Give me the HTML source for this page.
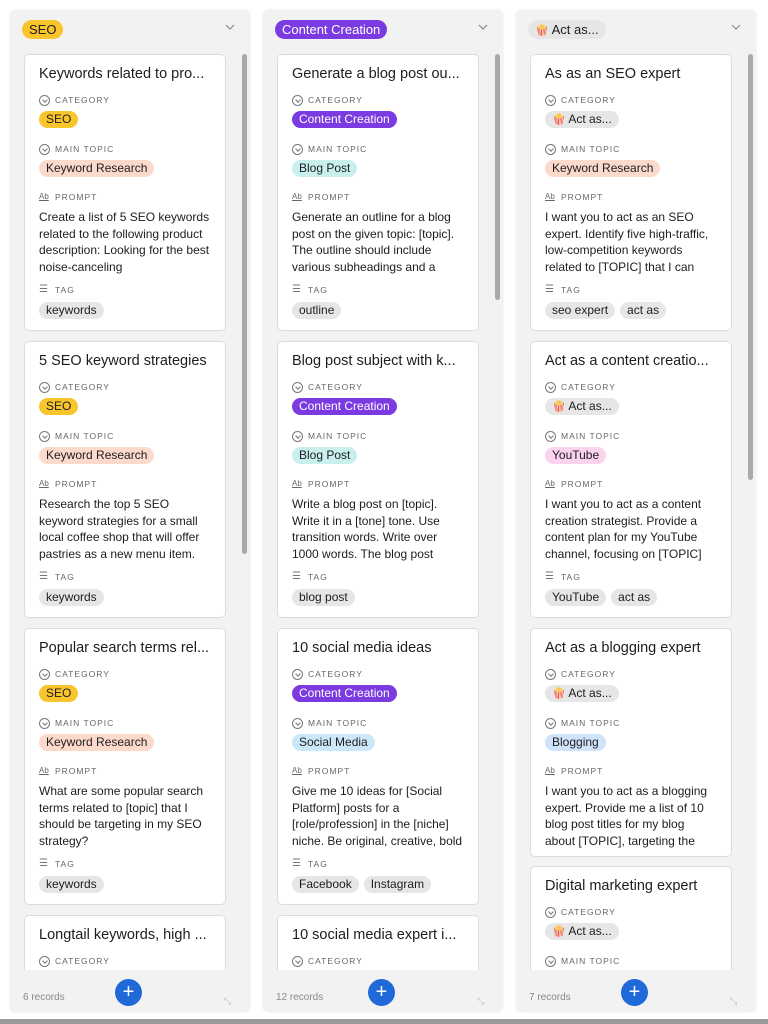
<!DOCTYPE html>
<html><head><style>
*{box-sizing:border-box;margin:0;padding:0}
html,body{width:768px;height:1024px;overflow:hidden}
body{background:#fff;font-family:"Liberation Sans",Arial,sans-serif;position:relative;color:#1d1d1f}
.col{position:absolute;top:10px;width:240px;height:1002px;background:#f2f2f2;border-radius:6px;box-shadow:0 0 2px rgba(0,0,0,.12);overflow:hidden}
.hdr{position:absolute;left:12px;top:10px;height:19px;border-radius:10px;font-size:13px;line-height:19px;padding:0 7px}
.chev{position:absolute;right:14px;top:12px;width:12px;height:10px}
.list{position:absolute;left:14px;top:44px;width:202px;height:916px;overflow:hidden}
.card{background:#fff;border:1px solid #dcdcdc;border-radius:5px;height:277px;margin-bottom:10px;padding:10px 14px 0 14px;overflow:hidden}
.t{font-size:14.5px;line-height:18px;height:18px;white-space:nowrap;overflow:hidden}
.lb{font-size:8.5px;letter-spacing:1px;color:#666;height:14px;line-height:14px;display:flex;align-items:center;gap:5px}
.ic{width:11px;height:11px;border:1px solid #777;border-radius:50%;position:relative;flex:none}
.ic:after{content:"";position:absolute;left:3px;top:2px;width:3px;height:3px;border-right:1px solid #777;border-bottom:1px solid #777;transform:rotate(45deg)}
.ab{font-size:8px;color:#666;letter-spacing:0;width:11px;text-decoration:underline;flex:none}
.tg{width:11px;flex:none;font-size:10px;color:#777;letter-spacing:-1px}
.pr{height:17px;display:flex;gap:5px}
.p{display:inline-block;height:17px;line-height:17px;font-size:12px;padding:0 7px;border-radius:9px;white-space:nowrap}
.m10{margin-top:10px}.m4{margin-top:4px}.m14{margin-top:14px}.m13{margin-top:13px}
.tx{margin-top:5px;font-size:12px;line-height:16.7px;height:67px;overflow:hidden}
.m7{margin-top:7px}.m45{margin-top:4.5px}
.seo{background:#f9c52c}.cc{background:#7b3be0;color:#fff}.act{background:#e6e6e6}
.kr{background:#fbdacb}.bp{background:#c9f0ee}.sm{background:#cce8f8}.yt{background:#fbd3ef}.bl{background:#cfe3fb}.gr{background:#e6e6e6}
.sb{position:absolute;width:5px;border-radius:3px;background:#a8a8a8}
.ft{position:absolute;top:982px;font-size:10px;color:#888}
.plus{position:absolute;top:969px;width:27px;height:27px;border-radius:50%;background:#1f6ad8;color:#fff;font-size:20px;line-height:26px;text-align:center}
.cmp{position:absolute;top:986px;font-size:9px;color:#bbb}
.pop{color:#c0392b;font-size:11px}
</style></head><body>

<div class="col" style="left:10px">
 <div class="hdr seo">SEO</div>
 <svg class="chev" viewBox="0 0 12 10"><path d="M2 3l4 4 4-4" fill="none" stroke="#888" stroke-width="1.2"/></svg>
 <div class="list">
  <div class="card"><div class="t">Keywords related to pro...</div>
   <div class="lb m10"><span class="ic"></span>CATEGORY</div><div class="pr m4"><span class="p seo">SEO</span></div>
   <div class="lb m14"><span class="ic"></span>MAIN TOPIC</div><div class="pr m4"><span class="p kr">Keyword Research</span></div>
   <div class="lb m13"><span class="ab">Ab</span>PROMPT</div>
   <div class="tx">Create a list of 5 SEO keywords related to the following product description: Looking for the best noise-canceling</div>
   <div class="lb m7"><span class="tg">☰</span>TAG</div><div class="pr m45"><span class="p gr">keywords</span></div></div>
  <div class="card"><div class="t">5 SEO keyword strategies</div>
   <div class="lb m10"><span class="ic"></span>CATEGORY</div><div class="pr m4"><span class="p seo">SEO</span></div>
   <div class="lb m14"><span class="ic"></span>MAIN TOPIC</div><div class="pr m4"><span class="p kr">Keyword Research</span></div>
   <div class="lb m13"><span class="ab">Ab</span>PROMPT</div>
   <div class="tx">Research the top 5 SEO keyword strategies for a small local coffee shop that will offer pastries as a new menu item.</div>
   <div class="lb m7"><span class="tg">☰</span>TAG</div><div class="pr m45"><span class="p gr">keywords</span></div></div>
  <div class="card"><div class="t">Popular search terms rel...</div>
   <div class="lb m10"><span class="ic"></span>CATEGORY</div><div class="pr m4"><span class="p seo">SEO</span></div>
   <div class="lb m14"><span class="ic"></span>MAIN TOPIC</div><div class="pr m4"><span class="p kr">Keyword Research</span></div>
   <div class="lb m13"><span class="ab">Ab</span>PROMPT</div>
   <div class="tx">What are some popular search terms related to [topic] that I should be targeting in my SEO strategy?</div>
   <div class="lb m7"><span class="tg">☰</span>TAG</div><div class="pr m45"><span class="p gr">keywords</span></div></div>
  <div class="card"><div class="t">Longtail keywords, high ...</div>
   <div class="lb m10"><span class="ic"></span>CATEGORY</div></div>
 </div>
 <div class="sb" style="left:232px;top:44px;height:500px"></div>
 <div class="ft" style="left:13px">6 records</div><div class="plus" style="left:105px">+</div><div class="cmp" style="left:214px">⤡</div>
</div>

<div class="col" style="left:263px">
 <div class="hdr cc">Content Creation</div>
 <svg class="chev" viewBox="0 0 12 10"><path d="M2 3l4 4 4-4" fill="none" stroke="#888" stroke-width="1.2"/></svg>
 <div class="list">
  <div class="card"><div class="t">Generate a blog post ou...</div>
   <div class="lb m10"><span class="ic"></span>CATEGORY</div><div class="pr m4"><span class="p cc">Content Creation</span></div>
   <div class="lb m14"><span class="ic"></span>MAIN TOPIC</div><div class="pr m4"><span class="p bp">Blog Post</span></div>
   <div class="lb m13"><span class="ab">Ab</span>PROMPT</div>
   <div class="tx">Generate an outline for a blog post on the given topic: [topic]. The outline should include various subheadings and a</div>
   <div class="lb m7"><span class="tg">☰</span>TAG</div><div class="pr m45"><span class="p gr">outline</span></div></div>
  <div class="card"><div class="t">Blog post subject with k...</div>
   <div class="lb m10"><span class="ic"></span>CATEGORY</div><div class="pr m4"><span class="p cc">Content Creation</span></div>
   <div class="lb m14"><span class="ic"></span>MAIN TOPIC</div><div class="pr m4"><span class="p bp">Blog Post</span></div>
   <div class="lb m13"><span class="ab">Ab</span>PROMPT</div>
   <div class="tx">Write a blog post on [topic]. Write it in a [tone] tone. Use transition words. Write over 1000 words. The blog post</div>
   <div class="lb m7"><span class="tg">☰</span>TAG</div><div class="pr m45"><span class="p gr">blog post</span></div></div>
  <div class="card"><div class="t">10 social media ideas</div>
   <div class="lb m10"><span class="ic"></span>CATEGORY</div><div class="pr m4"><span class="p cc">Content Creation</span></div>
   <div class="lb m14"><span class="ic"></span>MAIN TOPIC</div><div class="pr m4"><span class="p sm">Social Media</span></div>
   <div class="lb m13"><span class="ab">Ab</span>PROMPT</div>
   <div class="tx">Give me 10 ideas for [Social Platform] posts for a [role/profession] in the [niche] niche. Be original, creative, bold</div>
   <div class="lb m7"><span class="tg">☰</span>TAG</div><div class="pr m45"><span class="p gr">Facebook</span><span class="p gr">Instagram</span></div></div>
  <div class="card"><div class="t">10 social media expert i...</div>
   <div class="lb m10"><span class="ic"></span>CATEGORY</div></div>
 </div>
 <div class="sb" style="left:232px;top:44px;height:246px"></div>
 <div class="ft" style="left:13px">12 records</div><div class="plus" style="left:105px">+</div><div class="cmp" style="left:214px">⤡</div>
</div>

<div class="col" style="left:516px">
 <div class="hdr act"><span class="pop">🍿</span> Act as...</div>
 <svg class="chev" viewBox="0 0 12 10"><path d="M2 3l4 4 4-4" fill="none" stroke="#888" stroke-width="1.2"/></svg>
 <div class="list">
  <div class="card"><div class="t">As as an SEO expert</div>
   <div class="lb m10"><span class="ic"></span>CATEGORY</div><div class="pr m4"><span class="p act"><span class="pop">🍿</span> Act as...</span></div>
   <div class="lb m14"><span class="ic"></span>MAIN TOPIC</div><div class="pr m4"><span class="p kr">Keyword Research</span></div>
   <div class="lb m13"><span class="ab">Ab</span>PROMPT</div>
   <div class="tx">I want you to act as an SEO expert. Identify five high-traffic, low-competition keywords related to [TOPIC] that I can</div>
   <div class="lb m7"><span class="tg">☰</span>TAG</div><div class="pr m45"><span class="p gr">seo expert</span><span class="p gr">act as</span></div></div>
  <div class="card"><div class="t">Act as a content creatio...</div>
   <div class="lb m10"><span class="ic"></span>CATEGORY</div><div class="pr m4"><span class="p act"><span class="pop">🍿</span> Act as...</span></div>
   <div class="lb m14"><span class="ic"></span>MAIN TOPIC</div><div class="pr m4"><span class="p yt">YouTube</span></div>
   <div class="lb m13"><span class="ab">Ab</span>PROMPT</div>
   <div class="tx">I want you to act as a content creation strategist. Provide a content plan for my YouTube channel, focusing on [TOPIC]</div>
   <div class="lb m7"><span class="tg">☰</span>TAG</div><div class="pr m45"><span class="p gr">YouTube</span><span class="p gr">act as</span></div></div>
  <div class="card" style="height:229px;margin-bottom:9px"><div class="t">Act as a blogging expert</div>
   <div class="lb m10"><span class="ic"></span>CATEGORY</div><div class="pr m4"><span class="p act"><span class="pop">🍿</span> Act as...</span></div>
   <div class="lb m14"><span class="ic"></span>MAIN TOPIC</div><div class="pr m4"><span class="p bl">Blogging</span></div>
   <div class="lb m13"><span class="ab">Ab</span>PROMPT</div>
   <div class="tx">I want you to act as a blogging expert. Provide me a list of 10 blog post titles for my blog about [TOPIC], targeting the</div></div>
  <div class="card"><div class="t">Digital marketing expert</div>
   <div class="lb m10"><span class="ic"></span>CATEGORY</div><div class="pr m4"><span class="p act"><span class="pop">🍿</span> Act as...</span></div>
   <div class="lb m14"><span class="ic"></span>MAIN TOPIC</div></div>
 </div>
 <div class="sb" style="left:232px;top:44px;height:426px"></div>
 <div class="ft" style="left:13px">7 records</div><div class="plus" style="left:105px">+</div><div class="cmp" style="left:214px">⤡</div>
</div>

<div style="position:absolute;left:0;top:1019px;width:768px;height:5px;background:#9a9a9a"></div>
</body></html>
